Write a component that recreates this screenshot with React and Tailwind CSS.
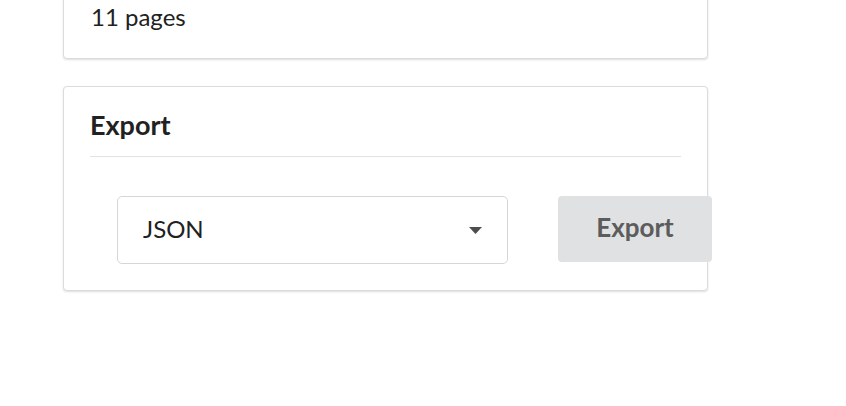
import React from "react";

export default function App() {
  return (
    <div className="w-[846px] h-[406px] overflow-hidden bg-white font-['Lato',sans-serif] text-[#212121]">
      <div className="ml-[63px] w-[645px] -mt-[27px]">
        <div className="rounded-[4px] border border-[#dcdcdd] bg-white px-[27px] pt-[27px] pb-[26px] shadow-[0_1px_2px_0_rgba(34,36,38,0.15)]">
          <div className="text-[24px] leading-[31px]">11 pages</div>
        </div>

        <div className="mt-[27px] rounded-[4px] border border-[#dcdcdd] bg-white px-[26px] pt-[22px] pb-[26px] shadow-[0_1px_2px_0_rgba(34,36,38,0.15)]">
          <h2 className="text-[27px] font-bold leading-[32px]">Export</h2>
          <div className="mt-[15px] h-px bg-[#e2e2e3]" />
          <div className="mt-[39px] ml-[27px] flex items-start gap-[50px]">
            <div className="flex h-[68px] w-[391px] shrink-0 items-center justify-between rounded-[5px] border border-[#d6d6d7] pl-[25px] pr-[25px]">
              <span className="text-[24px] pb-[2px]">JSON</span>
              <svg width="13" height="7" viewBox="0 0 13 7">
                <path d="M0 0 L13 0 L6.5 7 Z" fill="#4d4d4d" />
              </svg>
            </div>
            <button
              disabled
              className="h-[66px] w-[154px] shrink-0 rounded-[4px] bg-[#e0e1e2] pb-[4px] text-[26px] font-bold text-[#5c5c5c]"
            >
              Export
            </button>
          </div>
        </div>
      </div>
    </div>
  );
}
